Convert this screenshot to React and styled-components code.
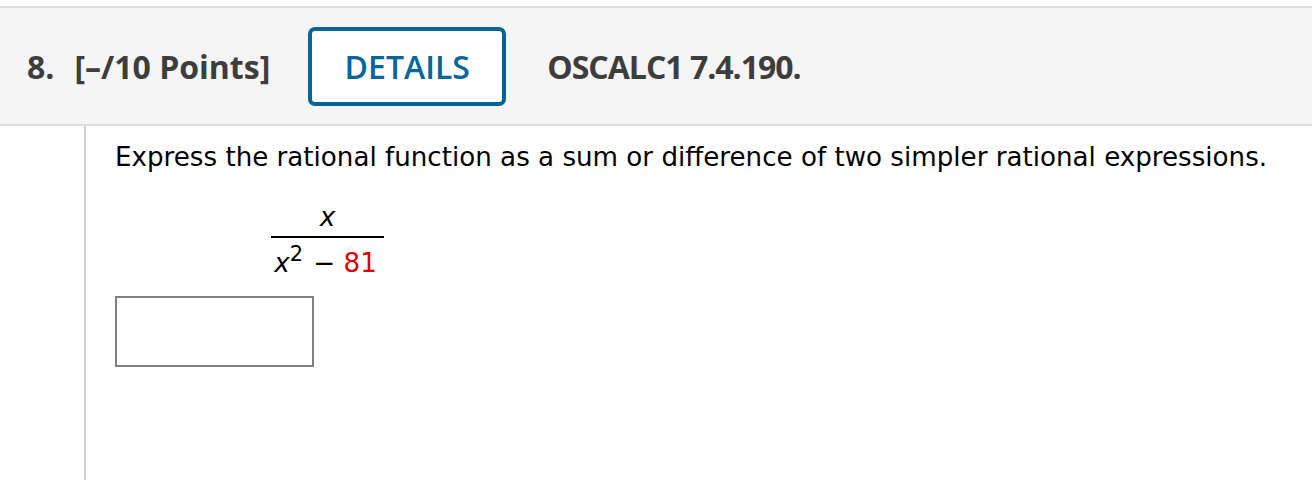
import React from "react";
import styled, { createGlobalStyle } from "styled-components";

const Global = createGlobalStyle`
  html, body {
    margin: 0;
    padding: 0;
    background: #fff;
  }
`;

const Page = styled.div`
  padding-top: 6px;
  height: 474px;
  display: flex;
  flex-direction: column;
  overflow: hidden;
`;

const Header = styled.div`
  display: flex;
  align-items: center;
  height: 116px;
  background: #f5f5f5;
  border-top: 2px solid #dedede;
  border-bottom: 2px solid #dedede;
  padding-left: 27px;
  font-family: "Open Sans", sans-serif;
  font-size: 32px;
  font-weight: 700;
  color: #3d3d3d;
`;

const Number = styled.span`
  margin-right: 20px;
`;

const DetailsButton = styled.button`
  margin-left: 38px;
  width: 198px;
  height: 79px;
  box-sizing: border-box;
  border: 4px solid #04659b;
  border-radius: 7px;
  background: #fff;
  color: #04659b;
  font-family: "Open Sans", sans-serif;
  font-size: 32px;
  font-weight: 600;
  padding: 0;
`;

const Code = styled.span`
  margin-left: 41px;
  letter-spacing: -1px;
`;

const Body = styled.div`
  flex: 1;
  display: flex;
`;

const Gutter = styled.div`
  width: 84px;
  border-right: 2px solid #cfcfcf;
`;

const Content = styled.div`
  padding: 16px 0 0 29px;
  font-family: "DejaVu Sans", Verdana, sans-serif;
  font-size: 26.15px;
  color: #000;
`;

const Prompt = styled.p`
  margin: 0;
  line-height: 30px;
`;

const Fraction = styled.div`
  display: inline-flex;
  flex-direction: column;
  align-items: center;
  margin: 30px 0 0 156px;
`;

const Numerator = styled.div`
  font-style: italic;
  line-height: 30px;
  padding-bottom: 4px;
`;

const Bar = styled.div`
  width: 113px;
  height: 2px;
  background: #000;
`;

const Denominator = styled.div`
  line-height: 30px;
  padding: 10px 4px 0 0;
  white-space: pre;
`;

const Var = styled.span`
  font-style: italic;
`;

const Sup = styled.sup`
  font-size: 21px;
  vertical-align: 11px;
  line-height: 0;
  margin-right: 2px;
`;

const Red = styled.span`
  color: #e00000;
`;

const AnswerBox = styled.input`
  display: block;
  margin-top: 18px;
  width: 199px;
  height: 71px;
  box-sizing: border-box;
  border: 2px solid #808080;
  background: #fff;
  outline: none;
`;

export default function App() {
  return (
    <>
      <Global />
      <Page>
        <Header>
          <Number>8.</Number>
          <span>[–/10 Points]</span>
          <DetailsButton>DETAILS</DetailsButton>
          <Code>OSCALC1 7.4.190.</Code>
        </Header>
        <Body>
          <Gutter />
          <Content>
            <Prompt>
              Express the rational function as a sum or difference of two simpler rational expressions.
            </Prompt>
            <Fraction>
              <Numerator>x</Numerator>
              <Bar />
              <Denominator>
                <Var>x</Var>
                <Sup>2</Sup> − <Red>81</Red>
              </Denominator>
            </Fraction>
            <AnswerBox />
          </Content>
        </Body>
      </Page>
    </>
  );
}
